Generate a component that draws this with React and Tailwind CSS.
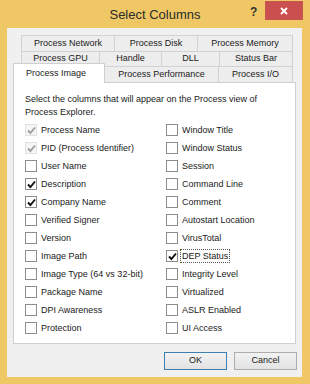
import React from 'react'

const tabRow1 = [
  { label: 'Process Network', w: 'w-[94px]' },
  { label: 'Process Disk', w: 'w-[83px]' },
  { label: 'Process Memory', w: 'w-[95px]' },
]

const tabRow2 = [
  { label: 'Process GPU', w: 'w-[79px]' },
  { label: 'Handle', w: 'w-[62px]' },
  { label: 'DLL', w: 'w-[58px]' },
  { label: 'Status Bar', w: 'w-[73px]' },
]

const leftCols = [
  { label: 'Process Name', checked: true, disabled: true },
  { label: 'PID (Process Identifier)', checked: true, disabled: true },
  { label: 'User Name' },
  { label: 'Description', checked: true },
  { label: 'Company Name', checked: true },
  { label: 'Verified Signer' },
  { label: 'Version' },
  { label: 'Image Path' },
  { label: 'Image Type (64 vs 32-bit)' },
  { label: 'Package Name' },
  { label: 'DPI Awareness' },
  { label: 'Protection' },
]

const rightCols = [
  { label: 'Window Title' },
  { label: 'Window Status' },
  { label: 'Session' },
  { label: 'Command Line' },
  { label: 'Comment' },
  { label: 'Autostart Location' },
  { label: 'VirusTotal' },
  { label: 'DEP Status', checked: true, focused: true },
  { label: 'Integrity Level' },
  { label: 'Virtualized' },
  { label: 'ASLR Enabled' },
  { label: 'UI Access' },
]

function Tab({ label, w, first }) {
  return (
    <div
      className={`${w} h-full flex items-center justify-center bg-[#ededed] border-t border-r border-[#d2d2d2] ${
        first ? 'border-l' : ''
      }`}
    >
      {label}
    </div>
  )
}

function CheckItem({ label, checked, disabled, focused }) {
  return (
    <div className="h-[18px] flex items-center gap-[3px]">
      <span
        className={`w-[12px] h-[12px] flex items-center justify-center border ${
          disabled ? 'border-[#e2e2e2] bg-[#f6f6f6]' : 'border-[#8c8c8c] bg-white'
        }`}
      >
        {checked && (
          <svg width="9" height="9" viewBox="0 0 9 9">
            <path
              d="M1 4.5 L3.4 7 L8 1.5"
              fill="none"
              stroke={disabled ? '#a0a0a0' : '#111'}
              strokeWidth="1.9"
            />
          </svg>
        )}
      </span>
      <span
        className={`leading-[12px] px-px ${
          focused ? 'outline outline-1 outline-dotted outline-[#555]' : ''
        }`}
      >
        {label}
      </span>
    </div>
  )
}

export default function App() {
  return (
    <div
      className="w-[310px] h-[384px] bg-[#efc865] flex flex-col text-[9px] text-[#1a1a1a]"
      style={{ fontFamily: '"Liberation Sans", Arial, sans-serif' }}
    >
      <div className="h-[28px] relative flex items-center justify-center">
        <span className="text-[13px] text-[#2b2b2b] mt-[1px]">Select Columns</span>
        <span className="absolute left-[250px] top-[3px] text-[12px] font-bold text-[#333]">?</span>
        <div className="absolute left-[265px] top-[1px] w-[38px] h-[19px] bg-[#c9504f] flex items-center justify-center">
          <svg width="8" height="8" viewBox="0 0 8 8">
            <path d="M1 1 L7 7 M7 1 L1 7" stroke="#fff" strokeWidth="1.8" />
          </svg>
        </div>
      </div>

      <div className="flex-1 ml-[7px] mr-[8px] mb-[7px] bg-[#f0f0f0] px-[6px] pt-[7px] flex flex-col">
        <div className="pl-[8px] h-[16px] flex">
          {tabRow1.map((t, i) => (
            <Tab key={t.label} {...t} first={i === 0} />
          ))}
        </div>
        <div className="pl-[8px] h-[15px] flex">
          {tabRow2.map((t, i) => (
            <Tab key={t.label} {...t} first={i === 0} />
          ))}
        </div>
        <div className="h-[16px] flex items-end">
          <div className="w-[92px] h-[20px] -mb-px relative z-10 bg-white border border-b-0 border-[#cfcfcf] flex items-start pt-[3px] pl-[12px]">
            Process Image
          </div>
          <Tab label="Process Performance" w="w-[114px]" />
          <Tab label="Process I/O" w="w-[74px]" />
        </div>

        <div className="h-[262px] bg-white border border-[#cfcfcf] px-[11px] pt-[10px]">
          <p className="leading-[13px]">
            Select the columns that will appear on the Process view of
            <br />
            Process Explorer.
          </p>
          <div className="grid grid-cols-[141px_1fr] mt-[2px]">
            <div className="flex flex-col">
              {leftCols.map((c) => (
                <CheckItem key={c.label} {...c} />
              ))}
            </div>
            <div className="flex flex-col">
              {rightCols.map((c) => (
                <CheckItem key={c.label} {...c} />
              ))}
            </div>
          </div>
        </div>

        <div className="flex justify-end gap-[7px] mt-[8px] -mr-px">
          <button className="w-[63px] h-[18px] border border-[#3c7fb1] bg-gradient-to-b from-[#f2f2f2] to-[#e3e3e3] text-[9px]">
            OK
          </button>
          <button className="w-[63px] h-[18px] border border-[#adadad] bg-gradient-to-b from-[#f2f2f2] to-[#e3e3e3] text-[9px]">
            Cancel
          </button>
        </div>
      </div>
    </div>
  )
}
